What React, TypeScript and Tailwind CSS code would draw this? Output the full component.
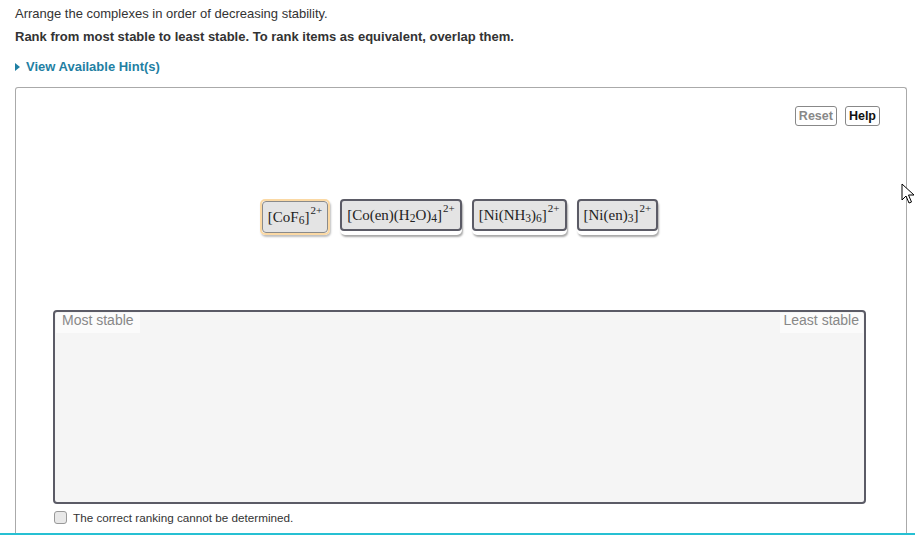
import React from 'react';

const serif = { fontFamily: '"Liberation Serif", "DejaVu Serif", serif' };

function Chip({ children, active = false }: { children: React.ReactNode; active?: boolean }) {
  return (
    <div
      className={
        active
          ? 'rounded-[5px] border-[2px] border-[#fbd9a4] shadow-[1px_2px_2px_rgba(0,0,0,0.25)]'
          : 'rounded-[5px] shadow-[1px_2px_2px_rgba(0,0,0,0.35)]'
      }
    >
      <div
        className={
          'flex h-[32px] items-center rounded-[4px] bg-[#e4e4e4] px-[5px] text-[15px] text-[#222] ' +
          (active ? 'border border-[#8a8a8a]' : 'border-[2px] border-[#5b5b66]')
        }
        style={serif}
      >
        {children}
      </div>
    </div>
  );
}

const Sub = ({ children }: { children: React.ReactNode }) => (
  <span className="relative top-[4px] text-[11.5px]">{children}</span>
);
const Sup = ({ children }: { children: React.ReactNode }) => (
  <span className="relative -top-[7px] ml-[1px] text-[11px]">{children}</span>
);

export default function App() {
  return (
    <div
      className="relative h-[535px] w-[915px] overflow-hidden bg-white text-[#333]"
      style={{ fontFamily: '"Liberation Sans", Arial, sans-serif' }}
    >
      <div className="pl-[15px] pt-[5px]">
        <p className="text-[13px] leading-[17px]">Arrange the complexes in order of decreasing stability.</p>
        <p className="mt-[7px] text-[13px] font-bold leading-[16px]">
          Rank from most stable to least stable. To rank items as equivalent, overlap them.
        </p>
        <div className="mt-[14px] flex items-center gap-[6px] text-[13px] font-bold leading-[16px] text-[#1f7fa3]">
          <svg width="5" height="8" viewBox="0 0 5 8">
            <path d="M0 0 L5 4 L0 8 Z" fill="#1f7fa3" />
          </svg>
          <span>View Available Hint(s)</span>
        </div>
      </div>

      {/* Panel */}
      <div className="ml-[15px] mt-[12px] h-[446px] w-[892px] rounded-t-[3px] border border-b-0 border-[#aaa]">
        <div className="flex justify-end gap-[8px] pr-[26px] pt-[18px]">
          <button className="h-[20px] rounded-[3px] border border-[#888] px-[3px] text-[12.5px] font-bold leading-[17px] text-[#888]">
            Reset
          </button>
          <button className="h-[20px] rounded-[3px] border border-[#888] px-[3px] text-[12.5px] font-bold leading-[17px] text-[#111]">
            Help
          </button>
        </div>

        <div className="mt-[73px] flex justify-center gap-[10px] pr-[4px]">
          <Chip active>
            [CoF<Sub>6</Sub>]<Sup>2+</Sup>
          </Chip>
          <Chip>
            [Co(en)(H<Sub>2</Sub>O)<Sub>4</Sub>]<Sup>2+</Sup>
          </Chip>
          <Chip>
            [Ni(NH<Sub>3</Sub>)<Sub>6</Sub>]<Sup>2+</Sup>
          </Chip>
          <Chip>
            [Ni(en)<Sub>3</Sub>]<Sup>2+</Sup>
          </Chip>
        </div>

        <div className="ml-[37px] mt-[75px] flex h-[194px] w-[813px] justify-between rounded-[4px] border-[2px] border-[#5b5b66] bg-[#f5f5f5] p-[1px]">
          <span className="h-[20px] bg-[#fbfbfb] px-[6px] text-[14px] leading-[15px] text-[#888]">Most stable</span>
          <span className="h-[20px] bg-[#fbfbfb] px-[4px] text-[14px] leading-[15px] text-[#888]">Least stable</span>
        </div>

        <label className="ml-[38px] mt-[5px] flex items-center gap-[6px] text-[11.7px] text-[#333]">
          <span className="inline-block h-[13px] w-[13px] rounded-[3px] border border-[#999] bg-[#e8e8e8]" />
          The correct ranking cannot be determined.
        </label>
      </div>
      <div className="h-[2px] w-full bg-[#26c0d3]" />

      {/* mouse cursor */}
      <svg className="absolute left-[901px] top-[183px]" width="14" height="22" viewBox="0 0 14 22">
        <path
          d="M1 1 L1 17 L5 13 L8 20 L10.5 19 L7.5 12 L13 12 Z"
          fill="#fff"
          stroke="#000"
          strokeWidth="1"
          strokeLinejoin="round"
        />
      </svg>
    </div>
  );
}
